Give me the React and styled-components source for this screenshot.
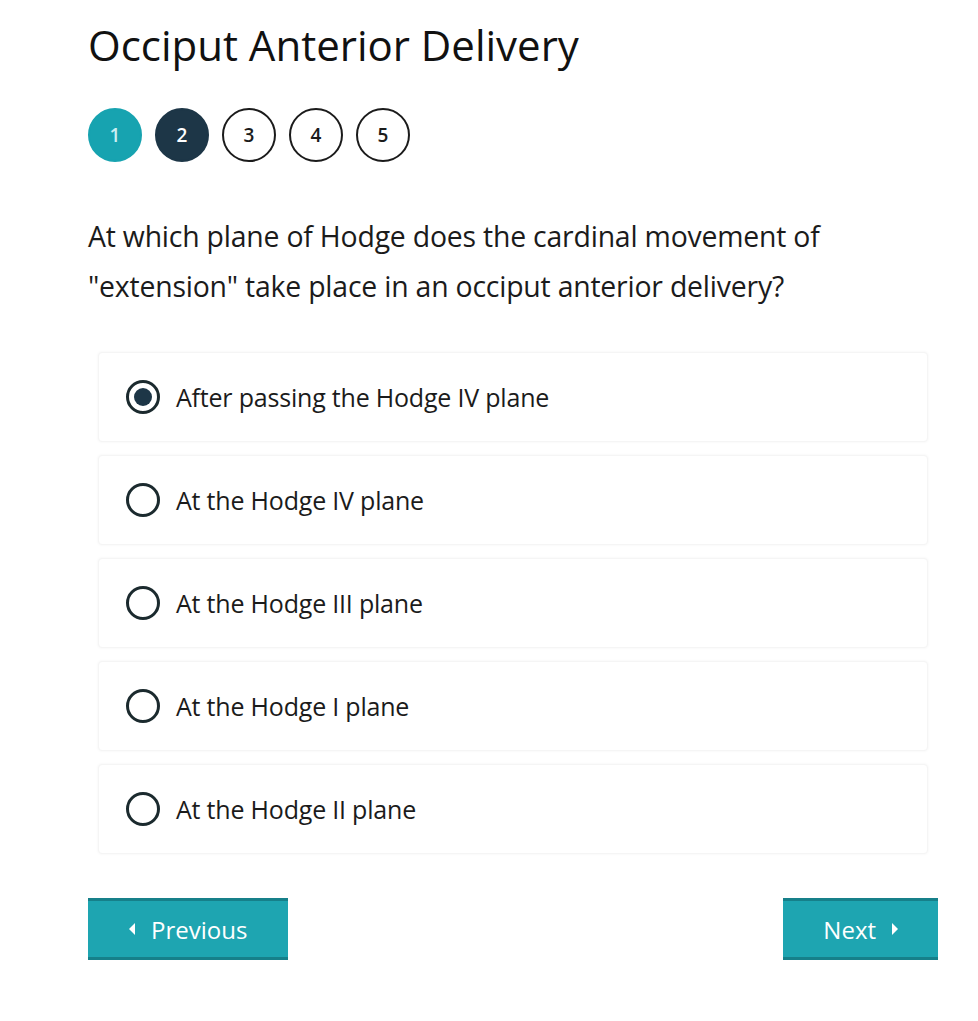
import React, { useState } from "react";
import styled, { createGlobalStyle } from "styled-components";

const GlobalStyle = createGlobalStyle`
  body {
    margin: 0;
    background: #ffffff;
    font-family: "Open Sans", "Liberation Sans", sans-serif;
    color: #1b1b1b;
  }
`;

const Page = styled.div`
  padding: 14px 40px 40px 88px;
`;

const Title = styled.h1`
  margin: 0;
  font-size: 42px;
  font-weight: 400;
  line-height: 62px;
  color: #111;
`;

const Steps = styled.div`
  display: flex;
  gap: 13px;
  margin-top: 32px;
`;

const Step = styled.div`
  width: 54px;
  height: 54px;
  box-sizing: border-box;
  border-radius: 50%;
  display: flex;
  align-items: center;
  justify-content: center;
  font-size: 19px;
  font-weight: 600;
  border: 2px solid
    ${(p) => (p.$state === "done" ? "#17a3b0" : p.$state === "current" ? "#1d3647" : "#1b1b1b")};
  background: ${(p) =>
    p.$state === "done" ? "#17a3b0" : p.$state === "current" ? "#1d3647" : "#fff"};
  color: ${(p) => (p.$state === "done" ? "#c9eef2" : p.$state === "current" ? "#fff" : "#1b1b1b")};
`;

const Question = styled.p`
  margin: 49px 0 0;
  font-size: 28.4px;
  line-height: 50px;
  letter-spacing: -0.2px;
  max-width: 780px;
  color: #1b1b1b;
`;

const Options = styled.div`
  display: flex;
  flex-direction: column;
  gap: 13px;
  margin: 41px 10px 0 10px;
`;

const Option = styled.label`
  height: 90px;
  box-sizing: border-box;
  display: flex;
  align-items: center;
  gap: 16px;
  padding: 0 27px;
  border-radius: 4px;
  background: #fff;
  box-shadow: 0 0 3px rgba(0, 0, 0, 0.05);
  border: 1px solid #f5f5f5;
  cursor: pointer;
  font-size: 25px;
  letter-spacing: -0.2px;
  color: #1b1b1b;
`;

const Radio = styled.span`
  width: 34px;
  height: 34px;
  box-sizing: border-box;
  border-radius: 50%;
  border: 3px solid #1b2a2e;
  display: flex;
  align-items: center;
  justify-content: center;
  flex-shrink: 0;
  &::after {
    content: "";
    width: 18px;
    height: 18px;
    border-radius: 50%;
    background: #1d3647;
    display: ${(p) => (p.$checked ? "block" : "none")};
  }
`;

const Nav = styled.div`
  display: flex;
  justify-content: space-between;
  margin-top: 44px;
`;

const Button = styled.button`
  height: 62px;
  box-sizing: border-box;
  padding: 0 ${(p) => p.$pad}px;
  background: #1ea5b1;
  color: #fff;
  border: none;
  border-top: 3px solid #16808a;
  border-bottom: 3px solid #16808a;
  font-family: inherit;
  font-size: 24px;
  display: flex;
  align-items: center;
  gap: 16px;
  cursor: pointer;
`;

const Arrow = styled.span`
  width: 0;
  height: 0;
  border-top: 6px solid transparent;
  border-bottom: 6px solid transparent;
  ${(p) => (p.$dir === "left" ? "border-right: 6px solid #fff;" : "border-left: 6px solid #fff;")}
`;

const options = [
  "After passing the Hodge IV plane",
  "At the Hodge IV plane",
  "At the Hodge III plane",
  "At the Hodge I plane",
  "At the Hodge II plane",
];

const steps = ["done", "current", "todo", "todo", "todo"];

export default function App() {
  const [selected, setSelected] = useState(0);
  return (
    <Page>
      <GlobalStyle />
      <Title>Occiput Anterior Delivery</Title>
      <Steps>
        {steps.map((s, i) => (
          <Step key={i} $state={s}>
            {i + 1}
          </Step>
        ))}
      </Steps>
      <Question>
        At which plane of Hodge does the cardinal movement of "extension" take place in an
        occiput anterior delivery?
      </Question>
      <Options>
        {options.map((o, i) => (
          <Option key={o} onClick={() => setSelected(i)}>
            <Radio $checked={selected === i} />
            {o}
          </Option>
        ))}
      </Options>
      <Nav>
        <Button $pad={41}>
          <Arrow $dir="left" />
          Previous
        </Button>
        <Button $pad={40}>
          Next
          <Arrow $dir="right" />
        </Button>
      </Nav>
    </Page>
  );
}
